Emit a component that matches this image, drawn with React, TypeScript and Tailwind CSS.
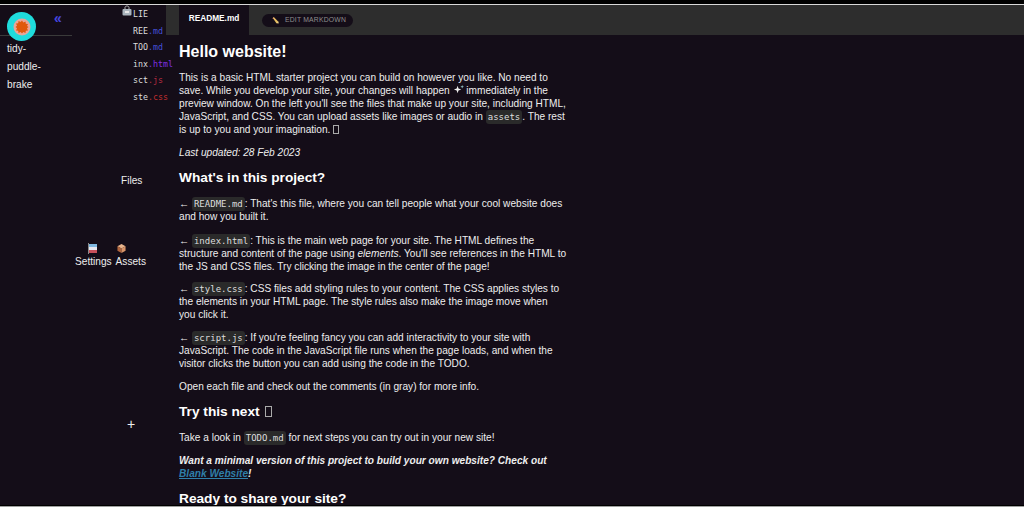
const files = [
  { name: 'REE', ext: '.md', color: 'text-[#4450d8]' },
  { name: 'TOO', ext: '.md', color: 'text-[#4450d8]' },
  { name: 'inx', ext: '.html', color: 'text-[#8030e0]' },
  { name: 'sct', ext: '.js', color: 'text-[#b82c42]' },
  { name: 'ste', ext: '.css', color: 'text-[#c02e2e]' },
]

function Code({ children }: { children: string }) {
  return (
    <code className="rounded-[3px] bg-[#2a2a2a] px-[2px] py-[2px] font-['DejaVu_Sans_Mono',monospace] text-[9px] leading-none text-[#dddddd]">
      {children}
    </code>
  )
}

function Sparkle() {
  return (
    <svg viewBox="0 0 12 12" className="inline-block h-[11px] w-[11px] align-[-1px]">
      <path d="M5 2 6 5 9 6 6 7 5 10 4 7 1 6 4 5Z" fill="#eee" />
      <path d="M10 1 10.500 2.500 12 3 10.500 3.500 10 5 9.500 3.500 8 3 9.500 2.500Z" fill="#9cc" />
    </svg>
  )
}

function Logo() {
  return (
    <div className="flex h-[29px] w-[29px] shrink-0 items-center justify-center rounded-full bg-[#1fdcdc]">
      <svg viewBox="0 0 18 18" className="h-[18px] w-[18px]">
        <circle cx="9" cy="9" r="8.500" fill="#eaa598" />
        <path
          d="M9 2.500 10.300 4.500 12.500 3.500 12.800 5.700 15 6 14 8 15.500 9 14 10.300 15 12.500 12.800 12.800 12.500 15 10.300 14 9 15.500 7.700 14 5.500 15 5.200 12.800 3 12.500 4 10.300 2.500 9 4 7.700 3 5.500 5.200 5.200 5.500 3 7.700 4Z"
          fill="#e0590c"
        />
      </svg>
    </div>
  )
}

function LockIcon() {
  return (
    <svg viewBox="0 0 10 11" className="h-[11px] w-[10px]">
      <path d="M3 4V2.500C3 1.500 4 1 5 1S7 1.500 7 2.500V4" fill="none" stroke="#b8b8b8" strokeWidth="1" />
      <rect x="0.500" y="4" width="9" height="6.500" rx="1" fill="#a9b4bc" />
      <rect x="3" y="6" width="4" height="2" fill="#e6e6e6" />
    </svg>
  )
}

function FlagIcon() {
  return (
    <svg viewBox="0 0 10 11" className="h-[11px] w-[10px]">
      <rect x="1" y="1" width="8" height="3" fill="#7fb8e0" />
      <rect x="1" y="4" width="8" height="3" fill="#e8e8f0" />
      <rect x="1" y="7" width="8" height="3" fill="#c8505a" />
      <rect x="0" y="0" width="1" height="11" fill="#8a8a8a" />
    </svg>
  )
}

function BoxIcon() {
  return (
    <svg viewBox="0 0 10 11" className="h-[11px] w-[9px]">
      <path d="M5 0.500 9.500 3 5 5.500 0.500 3Z" fill="#e8b48c" />
      <path d="M0.500 3 5 5.500V10.500L0.500 8Z" fill="#b0643c" />
      <path d="M9.500 3 5 5.500V10.500L9.500 8Z" fill="#d89468" />
    </svg>
  )
}

function PencilIcon() {
  return (
    <svg viewBox="0 0 8 8" className="mr-[6px] h-[7px] w-[7px] shrink-0">
      <path d="M1 1 2 0 7 5 7.500 7.500 5 7Z" fill="#e8c060" />
      <path d="M0.500 1.500 1.500 0.500 2.500 1.500 1.500 2.500Z" fill="#e89a70" />
      <path d="M6 6 7 5 7.500 7.500Z" fill="#f0e0c0" />
    </svg>
  )
}

export default function App() {
  return (
    <div className="flex h-[507px] flex-col overflow-hidden bg-[#140d18] font-['Liberation_Sans',sans-serif] text-[#eeeeee]">
      <div className="h-[4px] shrink-0 bg-black" />
      <div className="h-px shrink-0 bg-[#d8d8d8]" />
      <div className="flex min-h-0 flex-1 overflow-hidden">
        <aside className="flex w-[72px] shrink-0 flex-col">
          <div className="flex h-[31px] items-start border-b border-[#3a3a3a] pl-[7px] pt-[7px]">
            <Logo />
            <span className="ml-[18px] mt-[-3px] text-[14px] font-bold leading-[18px] text-[#4646e0]">«</span>
          </div>
          <div className="pl-[7px] pt-[4px] text-[10.150px] leading-[18px]">
            tidy-
            <br />
            puddle-
            <br />
            brake
          </div>
        </aside>

        <div className="flex w-[94px] shrink-0 flex-col text-[10.150px]">
          <div className="h-[169px] pl-[61px] pt-[1px] font-['DejaVu_Sans_Mono',monospace] text-[8.300px] leading-[16.500px] text-[#dddddd]">
            <div className="relative">
              <span className="absolute left-[-11px] top-[-1px]">
                <LockIcon />
              </span>
              LIE
            </div>
            {files.map((f) => (
              <div key={f.name}>
                {f.name}
                <span className={f.color}>{f.ext}</span>
              </div>
            ))}
          </div>
          <div className="pl-[49px] leading-[13px]">Files</div>
          <div className="mt-[56px] flex gap-[4px] pl-[3px] leading-[13px]">
            <div className="flex flex-col items-center">
              <FlagIcon />
              <span className="mt-px">Settings</span>
            </div>
            <div className="flex flex-col items-start">
              <span className="pl-px">
                <BoxIcon />
              </span>
              <span className="mt-px">Assets</span>
            </div>
          </div>
          <div className="mt-[148px] pl-[55px] text-[14px] leading-[16px]">+</div>
        </div>

        <main className="min-w-0 flex-1">
          <div className="flex h-[30px] items-center bg-[#2d2d2d] pl-[13px]">
            <div className="flex h-full w-[70px] items-center justify-center bg-[#140d18] pb-[3px] text-[8.300px] font-bold text-white">
              README.md
            </div>
            <div className="ml-[13px] flex h-[13px] w-[91px] items-center rounded-full bg-[#140d18] pl-[10px] text-[6.800px] tracking-[0.2px] text-[#8f8f8f]">
              <PencilIcon />
              EDIT MARKDOWN
            </div>
          </div>
          <article className="ml-[13px] w-[387.500px] text-[10.150px] leading-[13px]">
            <h1 className="mt-[8px] text-[16px] font-bold leading-[18px] text-white">Hello website!</h1>
            <p className="mt-[10px]">
              This is a basic HTML starter project you can build on however you like. No need to save. While you develop
              your site, your changes will happen <Sparkle /> immediately in the preview window. On the left you'll see
              the files that make up your site, including HTML, JavaScript, and CSS. You can upload assets like images or
              audio in <Code>assets</Code>. The rest is up to you and your imagination.{' '}
              <span className="inline-block h-[9px] w-[6px] border border-[#aaaaaa] align-[-1px]" />
            </p>
            <p className="mt-[10px] italic">Last updated: 28 Feb 2023</p>
            <h2 className="mt-[11px] text-[13.700px] font-bold leading-[16px] text-white">What's in this project?</h2>
            <p className="mt-[11px]">
              ← <Code>README.md</Code>: That's this file, where you can tell people what your cool website does and how
              you built it.
            </p>
            <p className="mt-[11px]">
              ← <Code>index.html</Code>: This is the main web page for your site. The HTML defines the structure and
              content of the page using <em>elements</em>. You'll see references in the HTML to the JS and CSS files. Try
              clicking the image in the center of the page!
            </p>
            <p className="mt-[9px]">
              ← <Code>style.css</Code>: CSS files add styling rules to your content. The CSS applies styles to the
              elements in your HTML page. The style rules also make the image move when you click it.
            </p>
            <p className="mt-[10px]">
              ← <Code>script.js</Code>: If you're feeling fancy you can add interactivity to your site with JavaScript.
              The code in the JavaScript file runs when the page loads, and when the visitor clicks the button you can add
              using the code in the TODO.
            </p>
            <p className="mt-[10px]">Open each file and check out the comments (in gray) for more info.</p>
            <h2 className="mt-[11px] text-[13.700px] font-bold leading-[16px] text-white">
              Try this next <span className="ml-[2px] inline-block h-[11px] w-[7px] border border-[#aaaaaa] align-[-1px]" />
            </h2>
            <p className="mt-[11px]">
              Take a look in <Code>TODO.md</Code> for next steps you can try out in your new site!
            </p>
            <p className="mt-[10px] font-bold italic">
              Want a minimal version of this project to build your own website? Check out{' '}
              <a className="text-[#2f7fa8] underline">Blank Website</a>!
            </p>
            <h2 className="mt-[11px] text-[13.700px] font-bold leading-[16px] text-white">Ready to share your site?</h2>
          </article>
        </main>
      </div>
      <div className="h-px shrink-0 bg-black" />
      <div className="h-px shrink-0 bg-[#a0a0a0]" />
    </div>
  )
}
